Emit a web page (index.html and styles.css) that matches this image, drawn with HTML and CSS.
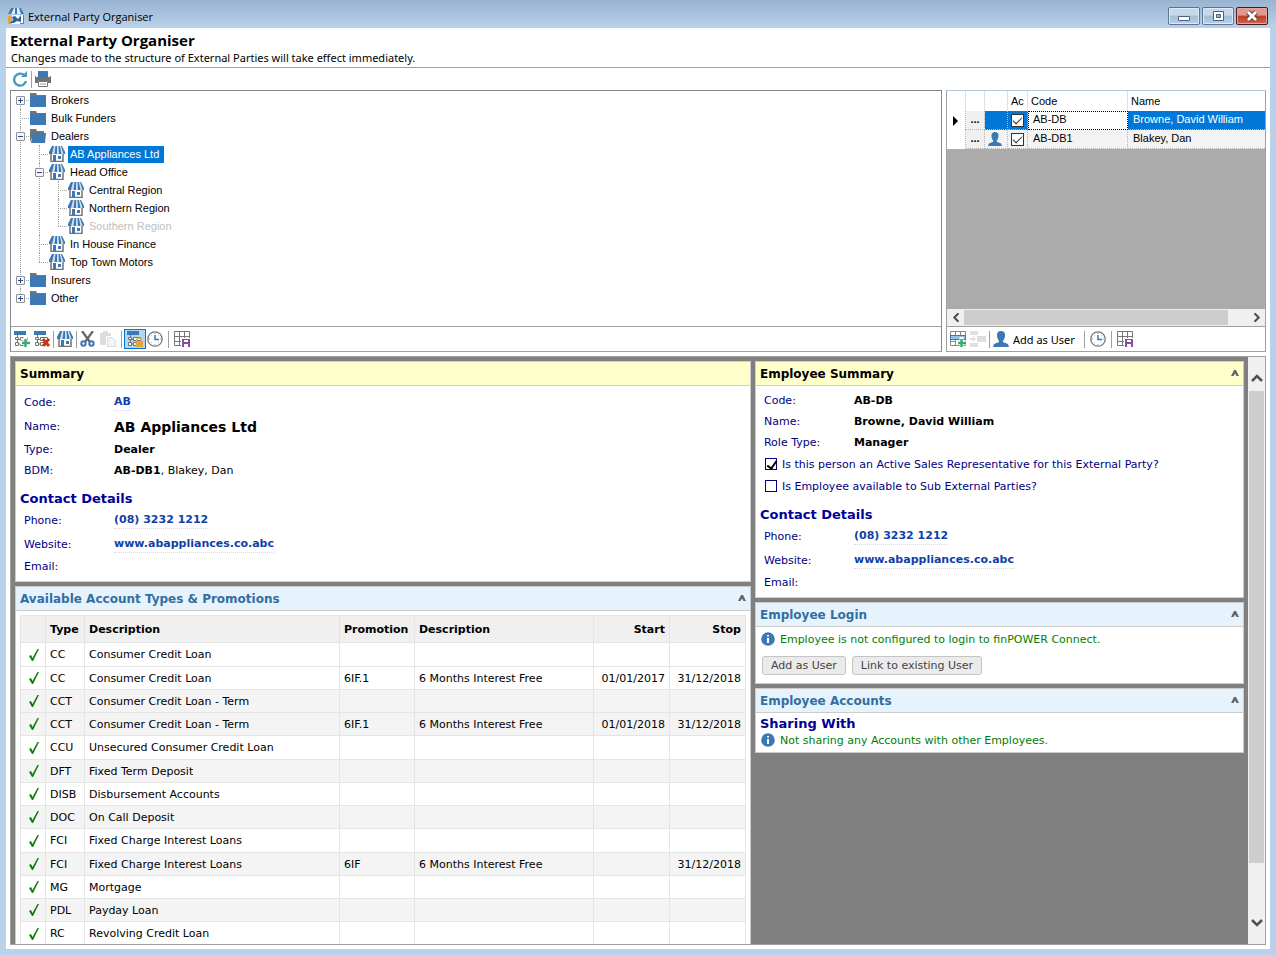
FILE: index.html
```html
<!DOCTYPE html>
<html lang="en">
<head>
<meta charset="utf-8">
<title>External Party Organiser</title>
<link rel="stylesheet" href="styles.css">
</head>
<body>
<svg class="sprite" aria-hidden="true">
  <symbol id="folder" viewBox="0 0 16 16"><path d="M0 1h6l1 2h9v2H0z" fill="#737373"/><path d="M0 4h16v11H0z" fill="#3b78b4"/></symbol>
  <symbol id="folder-open" viewBox="0 0 16 16"><path d="M0 1h6l1 2h7v3H4L0 14z" fill="#737373"/><path d="M3 5h13l-1 10H1z" fill="#3b78b4"/></symbol>
  <symbol id="shop" viewBox="0 0 16 16"><path d="M2 7v8.500h12V7" fill="#fff" stroke="#737373" stroke-width="1.500"/><path d="M3 0h10l3 6v2H0V6z" fill="#cfe0ee"/><path d="M3 0h2L3 8H0V6zM6.500 0H8v8H5.500zM9.500 0h1.300l1.700 8H10zM12 0h1l3 6v2h-1.500z" fill="#3b78b4"/><path d="M4 9h3v6H4zM9 10h3v3H9z" fill="#3b78b4"/></symbol>
  <symbol id="refresh" viewBox="0 0 16 16"><path d="M14 10A6 6 0 1 1 12 4" fill="none" stroke="#4a9bbb" stroke-width="2.400"/><path d="M15 0v6H9z" fill="#4a9bbb"/></symbol>
  <symbol id="print" viewBox="0 0 16 16"><path d="M3 0h10v2H3zM0 5h16v7h-3v-2H3v2H0z" fill="#737373"/><path d="M3 1h10v6H3z" fill="#3b78b4"/><path d="M2 1v5M14 1v5" stroke="#fff" stroke-width="2"/><path d="M3.500 10.500h9v5h-9z" fill="#fff" stroke="#737373"/><path d="M5 13h6" stroke="#999"/></symbol>
  <symbol id="tree-base" viewBox="0 0 16 16"><path d="M0 0h12v4H0z" fill="#3b78b4"/><path d="M3.500 4v9H6M3.500 8.500H6" fill="none" stroke="#737373"/><path d="M6.500 6.500h7v3h-7zM6.500 11.500h5v3h-5zM1.500 6.500h3v2h-3zM1.500 11.500h3v3h-3z" fill="#fff" stroke="#737373"/></symbol>
  <symbol id="plus" viewBox="0 0 16 16"><path d="M11.500 6v10M6 11.500h10" stroke="#fff" stroke-width="4"/><path d="M11.500 8v8M8 12h8" stroke="#3fa877" stroke-width="2.500"/></symbol>
  <symbol id="cross" viewBox="0 0 16 16"><path d="m9 8 6 7m0-7-6 7" stroke="#c9321b" stroke-width="2.800"/></symbol>
  <symbol id="lock" viewBox="0 0 16 16"><path d="M10 11V9a2 2 0 0 1 4 0v2" fill="none" stroke="#e8a33c" stroke-width="1.500"/><path d="M8.500 10H16v6H8.500z" fill="#e8a33c"/></symbol>
  <symbol id="cut" viewBox="0 0 16 16"><path d="m2 0 8 11M13 0 5 11" stroke="#666" stroke-width="2.200"/><circle cx="3.500" cy="12.500" r="2.200" fill="#fff" stroke="#3b78b4" stroke-width="2"/><circle cx="11.500" cy="12.500" r="2.200" fill="#fff" stroke="#3b78b4" stroke-width="2"/></symbol>
  <symbol id="paste" viewBox="0 0 16 16"><path d="M0 2h3V0h5v2h3v3H6v9H0z" fill="#dcdcdc"/><path d="M7.500 6.500h5l3 3v6h-8z" fill="#f4f4f4" stroke="#dcdcdc"/></symbol>
  <symbol id="clock" viewBox="0 0 16 16"><circle cx="8" cy="8" r="7.200" fill="#fff" stroke="#777" stroke-width="1.300"/><path d="M8 2v1M8 13v1M2 8h1M13 8h1M4 4l.5.500M12 4l-.5.500M4 12l.5-.5M12 12l-.5-.5" stroke="#999"/><path d="M8 4v4.500h4" fill="none" stroke="#3b78b4" stroke-width="1.500"/></symbol>
  <symbol id="grid-save" viewBox="0 0 16 16"><path d="M.5.500h15v14H.5zM5.500 0v15M10.500 0v15M0 5.500h16M0 10.500h16" fill="#fff" stroke="#777"/><path d="M7 7h9v9H7z" fill="#fff"/><path d="M8 8h8v8H8z" fill="#8b4aa8"/><path d="M10 9h4v2h-4zM10 13h4v3h-4z" fill="#fff"/></symbol>
  <symbol id="row-add" viewBox="0 0 16 16"><path d="M.5.500h15v14H.5zM5.500 0v15M10.500 0v15M0 10.500h16" fill="#fff" stroke="#888"/><path d="M0 4h16v5H0z" fill="#3b78b4"/><path d="M1 5h14v3H1z" fill="#8fc3e0"/></symbol>
  <symbol id="row-link" viewBox="0 0 16 16"><path d="M0 0h8v4H0zM7 5h9v6H7zM0 12h8v4H0zM0 7h3V5l3 3-3 3V9H0z" fill="#dfdfdf"/></symbol>
  <symbol id="user" viewBox="0 0 16 16"><path d="M4 4a4 4 0 0 1 8 0c0 3-1 5-2 6v1l5 2 1 3H0l1-3 5-2v-1C5 9 4 7 4 4z" fill="#3b78b4"/></symbol>
  <symbol id="info" viewBox="0 0 14 14"><circle cx="7" cy="7" r="6.800" fill="#3b78b4"/><path d="M6 3h2v1.500H6zM6 6h2v5H6z" fill="#fff"/></symbol>
  <symbol id="tick" viewBox="0 0 12 12"><path d="M1 7l2-1 1.500 3L9.500 0H11L5 12H4z" fill="#0a800a"/></symbol>
  <symbol id="caret" viewBox="0 0 8 7"><path d="M0 6 3 0h2l3 6H5.500L4 3.500 2.500 6z" fill="#666"/></symbol>
  <symbol id="chev" viewBox="0 0 12 8"><path d="m1 7 5-5 5 5" fill="none" stroke="#505050" stroke-width="2.500"/></symbol>
</svg>

<div class="window">
  <header class="titlebar">
    <svg class="i16" viewBox="0 0 16 16"><path d="M0 8h6v8H0z" fill="#e8a33c"/><path d="M4 7h11v9H4z" fill="#fff"/><path d="M3 0h10l3 6H0z" fill="#dce8f2"/><path d="M3 0 0 6h3l3-6zM7 0h2v6H7zM11 0l2 6h3l-3-6z" fill="#3b78b4"/><path d="m2 15 3-3-1-3 3-1 3 3 3-4v7l-4-1-3 2z" fill="#2d64a0"/><path d="M15.500 7v8.500H12" fill="none" stroke="#777"/></svg>
    <span class="caption">External Party Organiser</span>
    <div class="winbtns">
      <button class="wb" aria-label="Minimise"><svg viewBox="0 0 30 16"><path d="M9.500 8.500h11v4h-11z" fill="#fff" stroke="#4c5d78"/></svg></button>
      <button class="wb" aria-label="Maximise"><svg viewBox="0 0 30 16"><path d="M10.500 3.500h10v9h-10z" fill="#fff" stroke="#4c5d78"/><path d="M13.500 6.500h4v3h-4z" fill="#9cb8d8" stroke="#4c5d78"/></svg></button>
      <button class="wb close" aria-label="Close"><svg viewBox="0 0 30 16"><path d="m11 4 8 8m0-8-8 8" stroke="#5a3a40" stroke-width="5"/><path d="m11 4 8 8m0-8-8 8" stroke="#fff" stroke-width="3"/></svg></button>
    </div>
  </header>

  <main class="client">
    <div class="heading">
      <h1>External Party Organiser</h1>
      <p>Changes made to the structure of External Parties will take effect immediately.</p>
    </div>
    <div class="toolbar main-tools">
      <button class="tb" aria-label="Refresh"><svg class="i16"><use href="#refresh"/></svg></button><i class="sep"></i>
      <button class="tb" aria-label="Print"><svg class="i16"><use href="#print"/></svg></button>
    </div>

    <div class="upper">
      <section class="treepane">
        <ul class="tree">
          <li><div class="node"><button class="exp plus" aria-label="Expand"></button><svg class="i16"><use href="#folder"/></svg><span>Brokers</span></div></li>
          <li><div class="node"><svg class="i16"><use href="#folder"/></svg><span>Bulk Funders</span></div></li>
          <li><div class="node"><button class="exp" aria-label="Collapse"></button><svg class="i16"><use href="#folder-open"/></svg><span>Dealers</span></div>
            <ul>
              <li><div class="node"><svg class="i16"><use href="#shop"/></svg><span class="selected">AB Appliances Ltd</span></div></li>
              <li><div class="node"><button class="exp" aria-label="Collapse"></button><svg class="i16"><use href="#shop"/></svg><span>Head Office</span></div>
                <ul>
                  <li><div class="node"><svg class="i16"><use href="#shop"/></svg><span>Central Region</span></div></li>
                  <li><div class="node"><svg class="i16"><use href="#shop"/></svg><span>Northern Region</span></div></li>
                  <li><div class="node"><svg class="i16"><use href="#shop"/></svg><span class="inactive">Southern Region</span></div></li>
                </ul>
              </li>
              <li><div class="node"><svg class="i16"><use href="#shop"/></svg><span>In House Finance</span></div></li>
              <li><div class="node"><svg class="i16"><use href="#shop"/></svg><span>Top Town Motors</span></div></li>
            </ul>
          </li>
          <li><div class="node"><button class="exp plus" aria-label="Expand"></button><svg class="i16"><use href="#folder"/></svg><span>Insurers</span></div></li>
          <li><div class="node"><button class="exp plus" aria-label="Expand"></button><svg class="i16"><use href="#folder"/></svg><span>Other</span></div></li>
        </ul>
        <div class="toolbar pane-tools">
          <button class="tb" aria-label="Add party"><svg class="i16"><use href="#tree-base"/><use href="#plus"/></svg></button>
          <button class="tb" aria-label="Remove party"><svg class="i16"><use href="#tree-base"/><use href="#cross"/></svg></button><i class="sep"></i>
          <button class="tb" aria-label="Open party"><svg class="i16"><use href="#shop"/></svg></button><i class="sep"></i>
          <button class="tb" aria-label="Cut"><svg class="i16"><use href="#cut"/></svg></button>
          <button class="tb" aria-label="Paste" disabled><svg class="i16"><use href="#paste"/></svg></button><i class="sep wide"></i>
          <button class="tb on" aria-label="Lock structure"><svg class="i16"><use href="#tree-base"/><use href="#lock"/></svg></button>
          <button class="tb" aria-label="History"><svg class="i16"><use href="#clock"/></svg></button><i class="sep wide"></i>
          <button class="tb" aria-label="Save grid"><svg class="i16"><use href="#grid-save"/></svg></button>
        </div>
      </section>

      <section class="gridpane">
        <div class="gridbody">
          <table class="grid">
            <colgroup><col class="g-mark"><col class="g-dots"><col class="g-user"><col class="g-act"><col class="g-code"><col></colgroup>
            <thead><tr><th></th><th></th><th></th><th>Ac</th><th>Code</th><th>Name</th></tr></thead>
            <tbody>
              <tr class="current"><td class="mark"><svg viewBox="0 0 5 10" width="5" height="10"><path d="M0 0l5 5-5 5z"/></svg></td><td class="dots"><button aria-label="Edit AB-DB">...</button></td><td></td><td><input type="checkbox" checked aria-label="Active AB-DB"></td><td class="focus">AB-DB</td><td>Browne, David William</td></tr>
              <tr class="odd"><td class="mark"></td><td class="dots"><button aria-label="Edit AB-DB1">...</button></td><td class="usr"><svg class="i14"><use href="#user"/></svg></td><td><input type="checkbox" checked aria-label="Active AB-DB1"></td><td>AB-DB1</td><td>Blakey, Dan</td></tr>
            </tbody>
          </table>
        </div>
        <div class="hscroll"><button aria-label="Scroll left"><svg class="left" width="10" height="7"><use href="#chev"/></svg></button><div class="htrack"><div class="hthumb"></div></div><button aria-label="Scroll right"><svg class="right" width="10" height="7"><use href="#chev"/></svg></button></div>
        <div class="toolbar pane-tools">
          <button class="tb" aria-label="Add employee"><svg class="i16"><use href="#row-add"/><use href="#plus"/></svg></button>
          <button class="tb" aria-label="Remove employee" disabled><svg class="i16"><use href="#row-link"/></svg></button><i class="sep"></i>
          <button class="tb text"><svg class="i16"><use href="#user"/></svg>Add as User</button><i class="sep wide"></i>
          <button class="tb" aria-label="History"><svg class="i16"><use href="#clock"/></svg></button><i class="sep wide"></i>
          <button class="tb" aria-label="Save grid"><svg class="i16"><use href="#grid-save"/></svg></button>
        </div>
      </section>
    </div>

    <div class="lower">
      <div class="cards">
        <div class="col">
          <section class="card">
            <h2 class="bar yellow">Summary</h2>
            <div class="body">
              <div class="row tall"><span class="lab">Code:</span><a href="#">AB</a></div>
              <div class="row name"><span class="lab">Name:</span><b class="big">AB Appliances Ltd</b></div>
              <div class="row"><span class="lab">Type:</span><b>Dealer</b></div>
              <div class="row"><span class="lab">BDM:</span><span><b>AB-DB1</b>, Blakey, Dan</span></div>
              <h3>Contact Details</h3>
              <div class="row tall"><span class="lab">Phone:</span><a href="#">(08) 3232 1212</a></div>
              <div class="row tall"><span class="lab">Website:</span><a href="#">www.abappliances.co.abc</a></div>
              <div class="row"><span class="lab">Email:</span></div>
            </div>
          </section>
          <section class="card grow">
            <h2 class="bar">Available Account Types &amp; Promotions<button aria-label="Collapse"><svg width="8" height="7"><use href="#caret"/></svg></button></h2>
            <table class="types">
              <colgroup><col class="t-tick"><col class="t-type"><col><col class="t-promo"><col class="t-desc"><col class="t-date"><col class="t-date"></colgroup>
              <thead><tr><th></th><th>Type</th><th>Description</th><th>Promotion</th><th>Description</th><th class="r">Start</th><th class="r">Stop</th></tr></thead>
              <tbody>
                <tr><td><svg class="tick"><use href="#tick"/></svg></td><td>CC</td><td>Consumer Credit Loan</td><td></td><td></td><td></td><td></td></tr>
                <tr><td><svg class="tick"><use href="#tick"/></svg></td><td>CC</td><td>Consumer Credit Loan</td><td>6IF.1</td><td>6 Months Interest Free</td><td class="r">01/01/2017</td><td class="r">31/12/2018</td></tr>
                <tr class="alt"><td><svg class="tick"><use href="#tick"/></svg></td><td>CCT</td><td>Consumer Credit Loan - Term</td><td></td><td></td><td></td><td></td></tr>
                <tr class="alt"><td><svg class="tick"><use href="#tick"/></svg></td><td>CCT</td><td>Consumer Credit Loan - Term</td><td>6IF.1</td><td>6 Months Interest Free</td><td class="r">01/01/2018</td><td class="r">31/12/2018</td></tr>
                <tr><td><svg class="tick"><use href="#tick"/></svg></td><td>CCU</td><td>Unsecured Consumer Credit Loan</td><td></td><td></td><td></td><td></td></tr>
                <tr class="alt"><td><svg class="tick"><use href="#tick"/></svg></td><td>DFT</td><td>Fixed Term Deposit</td><td></td><td></td><td></td><td></td></tr>
                <tr><td><svg class="tick"><use href="#tick"/></svg></td><td>DISB</td><td>Disbursement Accounts</td><td></td><td></td><td></td><td></td></tr>
                <tr class="alt"><td><svg class="tick"><use href="#tick"/></svg></td><td>DOC</td><td>On Call Deposit</td><td></td><td></td><td></td><td></td></tr>
                <tr><td><svg class="tick"><use href="#tick"/></svg></td><td>FCI</td><td>Fixed Charge Interest Loans</td><td></td><td></td><td></td><td></td></tr>
                <tr class="alt"><td><svg class="tick"><use href="#tick"/></svg></td><td>FCI</td><td>Fixed Charge Interest Loans</td><td>6IF</td><td>6 Months Interest Free</td><td></td><td class="r">31/12/2018</td></tr>
                <tr><td><svg class="tick"><use href="#tick"/></svg></td><td>MG</td><td>Mortgage</td><td></td><td></td><td></td><td></td></tr>
                <tr class="alt"><td><svg class="tick"><use href="#tick"/></svg></td><td>PDL</td><td>Payday Loan</td><td></td><td></td><td></td><td></td></tr>
                <tr><td><svg class="tick"><use href="#tick"/></svg></td><td>RC</td><td>Revolving Credit Loan</td><td></td><td></td><td></td><td></td></tr>
              </tbody>
            </table>
          </section>
        </div>

        <div class="col">
          <section class="card">
            <h2 class="bar yellow">Employee Summary<button aria-label="Collapse"><svg width="8" height="7"><use href="#caret"/></svg></button></h2>
            <div class="body">
              <div class="row"><span class="lab">Code:</span><b>AB-DB</b></div>
              <div class="row"><span class="lab">Name:</span><b>Browne, David William</b></div>
              <div class="row"><span class="lab">Role Type:</span><b>Manager</b></div>
              <label class="check"><input type="checkbox" checked>Is this person an Active Sales Representative for this External Party?</label>
              <label class="check"><input type="checkbox">Is Employee available to Sub External Parties?</label>
              <h3>Contact Details</h3>
              <div class="row tall"><span class="lab">Phone:</span><a href="#">(08) 3232 1212</a></div>
              <div class="row tall"><span class="lab">Website:</span><a href="#">www.abappliances.co.abc</a></div>
              <div class="row"><span class="lab">Email:</span></div>
            </div>
          </section>
          <section class="card">
            <h2 class="bar">Employee Login<button aria-label="Collapse"><svg width="8" height="7"><use href="#caret"/></svg></button></h2>
            <div class="body login">
              <p class="note"><svg class="i14"><use href="#info"/></svg>Employee is not configured to login to finPOWER Connect.</p>
              <div class="actions"><button>Add as User</button><button>Link to existing User</button></div>
            </div>
          </section>
          <section class="card">
            <h2 class="bar">Employee Accounts<button aria-label="Collapse"><svg width="8" height="7"><use href="#caret"/></svg></button></h2>
            <div class="body sharing">
              <h3>Sharing With</h3>
              <p class="note"><svg class="i14"><use href="#info"/></svg>Not sharing any Accounts with other Employees.</p>
            </div>
          </section>
        </div>
      </div>
      <div class="vscroll"><button class="up" aria-label="Scroll up"><svg width="12" height="8"><use href="#chev"/></svg></button><div class="vtrack"><div class="vthumb"></div></div><button class="dn" aria-label="Scroll down"><svg class="down" width="12" height="8"><use href="#chev"/></svg></button></div>
    </div>
  </main>
</div>
</body>
</html>
```
FILE: styles.css
```css
* { box-sizing: border-box; }
body { margin: 0; color: #000; font: 12px "Open Sans", "Noto Sans", sans-serif; }
h1, h2, h3, p, ul { margin: 0; padding: 0; }
button { font: inherit; color: inherit; background: none; border: 0; padding: 0; }
svg { display: block; flex: none; }
.sprite { position: absolute; width: 0; height: 0; }
.i16 { width: 16px; height: 16px; }
.i14 { width: 14px; height: 14px; }

.window { height: 100vh; display: flex; flex-direction: column; background: linear-gradient(#99b4d1, #b9d1ea 28px, #b9d1ea); padding: 0 6px 6px; overflow: hidden; }
.titlebar { height: 28px; display: flex; align-items: center; gap: 4px; padding: 4px 2px 0; font-size: 11px; }
.caption { flex: 1; }
.winbtns { display: flex; gap: 2px; }
.wb { width: 32px; height: 18px; border: 1px solid #5f7691; border-radius: 2px; background: linear-gradient(#c5d8ec 45%, #a2bdd9 50%, #b8d0e8); box-shadow: inset 0 0 0 1px #dfeaf5; }
.wb svg { width: 30px; height: 16px; }
.close { border-color: #4d1822; background: linear-gradient(#e0998a 45%, #bc3d22 50%, #d0674c); box-shadow: inset 0 0 0 1px #e5a898; }

.client { flex: 1; min-height: 0; display: flex; flex-direction: column; background: #fff; padding-bottom: 4px; }
.heading { height: 40px; padding: 3px 4px 0; border-bottom: 1px solid #a0a0a0; }
h1 { font-size: 15px; line-height: 18px; }
.heading p { font: 11px/18px "Noto Sans", sans-serif; padding-left: 1px; }
.toolbar { display: flex; align-items: center; font: 11px "Noto Sans", sans-serif; }
.tb { display: flex; align-items: center; padding: 2px; }
.tb.on { background: #b3d7f3; box-shadow: 0 0 0 1px #0078d7; padding: 1px 2px; }
.tb.text { gap: 4px; padding-right: 6px; }
.sep { width: 1px; height: 17px; background: #a0a0a0; margin: 0 1px; }
.sep.wide { margin: 0 3px; }
.main-tools { height: 22px; padding-left: 4px; }
.pane-tools { height: 25px; padding-left: 1px; border-top: 1px solid #a0a0a0; }

.upper { display: flex; gap: 4px; height: 262px; padding: 0 4px; flex: none; }
.treepane { flex: 1; display: flex; flex-direction: column; border: 1px solid #828790; }
.treepane, .gridpane { border-bottom-color: #a0a0a0; }
.tree { flex: 1; padding-left: 5px; }
.tree, .grid { font: 11px "Liberation Sans", Arial, sans-serif; }
.tree ul { margin-left: 19px; }
.tree li { list-style: none; position: relative; }
.tree li::before { content: ""; position: absolute; left: 4px; top: 0; bottom: 0; border-left: 1px dotted #a0a0a0; }
.tree > li:first-child::before { top: 9px; }
.tree li:last-child::before { bottom: auto; height: 9px; }
.node { height: 18px; display: flex; align-items: center; padding-left: 14px; position: relative; }
.node::before { content: ""; position: absolute; left: 4px; top: 9px; width: 9px; border-top: 1px dotted #a0a0a0; }
.node span { margin-left: 3px; padding: 0 2px; line-height: 17px; }
.node .selected { background: #0078d7; color: #fff; padding-right: 5px; }
.node .inactive { color: #c0c0c0; }
.exp { position: absolute; left: 0; top: 5px; width: 9px; height: 9px; border: 1px solid #919191; border-radius: 1px; background: linear-gradient(#2b4c8c, #2b4c8c) center / 5px 1px no-repeat, #f6f6f6; }
.exp.plus { background: linear-gradient(#2b4c8c, #2b4c8c) center / 5px 1px no-repeat, linear-gradient(#2b4c8c, #2b4c8c) center / 1px 5px no-repeat, #f6f6f6; }

.gridpane { flex: none; width: 26%; max-width: 320px; display: flex; flex-direction: column; border: 1px solid #a0a0a0; border-top-color: #b4c8dc; }
.gridbody { flex: 1; background: #ababab; overflow: hidden; }
.grid { width: 100%; table-layout: fixed; border-collapse: separate; border-spacing: 0; background: #fff; }
.g-mark, .g-dots { width: 19px; }
.g-user { width: 23px; }
.g-act { width: 20px; }
.g-code { width: 100px; }
.grid th { height: 20px; font-weight: 400; text-align: left; padding: 0 0 0 3px; border-right: 1px solid #e0e0e0; }
.grid td { height: 19px; padding: 0 0 2px 5px; border-right: 1px dotted #b4b4b4; border-bottom: 1px dotted #b4b4b4; line-height: 16px; }
.grid th:last-child, .grid td:last-child { border-right: 0; }
.grid td:nth-child(-n+4) { padding: 0 0 0 3px; }
.grid .odd { background: #f3f3f3; }
.grid .current { background: #0078d7; color: #fff; }
.grid td.mark { background: #fff; padding-left: 6px; border-bottom: 0; }
.grid td.dots { background: #f0f0f0; color: #000; text-align: center; padding: 0 0 3px; line-height: 12px; font-weight: 700; }
.grid td.focus { background: #fff; color: #000; outline: 1px dotted #000; outline-offset: -1px; }
.grid input { appearance: none; display: block; margin: 0; width: 13px; height: 13px; border: 1px solid #333; background: #fff; }
.grid input:checked::after { content: ""; display: block; width: 8px; height: 4px; margin: 2px 1px; border: solid #333; border-width: 0 0 1px 1px; transform: rotate(-45deg); }
.hscroll { display: flex; height: 17px; background: #f0f0f0; }
.hscroll button { width: 17px; display: flex; align-items: center; justify-content: center; }
.left { transform: rotate(-90deg); }
.right { transform: rotate(90deg); }
.down { transform: rotate(180deg); }
.htrack { flex: 1; }
.hthumb { width: 93%; height: 15px; margin-top: 1px; background: #cdcdcd; }

.lower { flex: 1; min-height: 0; display: flex; margin: 4px 4px 0; border: 1px solid #a0a0a0; background: #808080; font: 11px "DejaVu Sans", Verdana, sans-serif; overflow: hidden; }
.cards { flex: 1; display: grid; grid-template-columns: 301fr 200fr; gap: 4px; padding: 4px 4px 0; min-width: 0; overflow: hidden; }
.col { display: flex; flex-direction: column; gap: 4px; min-height: 0; min-width: 0; }
.card { flex: none; background: #fff; border: 1px solid #ccc; }
.card.grow { flex: 1 0 auto; border-bottom: 0; }
.bar { height: 24px; display: flex; align-items: center; justify-content: space-between; padding: 0 4px; font-size: 12px; background: #e6f3fd; color: #336e9f; border-bottom: 1px solid #ccc; }
.bar.yellow { background: #ffffcc; color: #000; }
.body { padding: 4px; }
.row { display: flex; align-items: center; min-height: 21px; padding-left: 4px; }
.row.tall { min-height: 24px; }
.row.name { min-height: 25px; }
.lab { width: 90px; color: #000080; }
.big { font-size: 14px; }
h3 { margin-top: 9px; font-size: 13px; line-height: 18px; color: #000099; }
a { color: #0f41a8; font-weight: 700; text-decoration: none; border-bottom: 1px dotted #d4d4f8; line-height: 16px; padding-top: 1px; }
.check { display: flex; align-items: center; gap: 5px; height: 22px; padding-left: 5px; color: #000080; }
.check input { appearance: none; margin: 0; width: 12px; height: 12px; border: 1px solid #000080; }
.check input:checked::after { content: ""; display: block; width: 4px; height: 8px; margin: 0 3px; border: solid #000; border-width: 0 2px 2px 0; transform: rotate(35deg); }
.note { display: flex; align-items: center; gap: 5px; color: #008000; height: 16px; padding-left: 1px; }
.login { padding: 4px 6px 8px 4px; }
.actions { display: flex; gap: 6px; margin: 9px 2px 0; }
.actions button { height: 19px; padding: 0 8px; background: #ebebeb; border: 1px solid #c4c4c4; border-radius: 3px; color: #444; }
.sharing { padding: 2px 4px 4px; }
.sharing h3 { margin: 0; line-height: 17px; }

.types { width: calc(100% - 8px); margin: 4px 4px 0; table-layout: fixed; border-collapse: collapse; }
.types th, .types td { border: 1px solid #e5e5e5; padding: 0 4px; text-align: left; white-space: nowrap; }
.types th { background: #f0f0f0; height: 27px; }
.types td { height: 23px; }
.types tbody tr:nth-child(4n+1) td { height: 24px; }
.types .alt { background: #f4f4f4; }
.types .r { text-align: right; }
.t-tick { width: 25px; }
.t-type { width: 39px; }
.t-promo { width: 75px; }
.t-desc { width: 179px; }
.t-date { width: 76px; }
.tick { width: 12px; height: 12px; margin-left: 3px; }

.vscroll { width: 17px; background: #f0f0f0; display: flex; flex-direction: column; flex: none; }
.vscroll button { height: 34px; display: flex; justify-content: center; align-items: center; }
.vscroll .up { padding-top: 8px; }
.vscroll .dn { padding-bottom: 9px; }
.vtrack { flex: 1; padding: 0 1px; }
.vthumb { height: 91%; background: #cdcdcd; }
```
